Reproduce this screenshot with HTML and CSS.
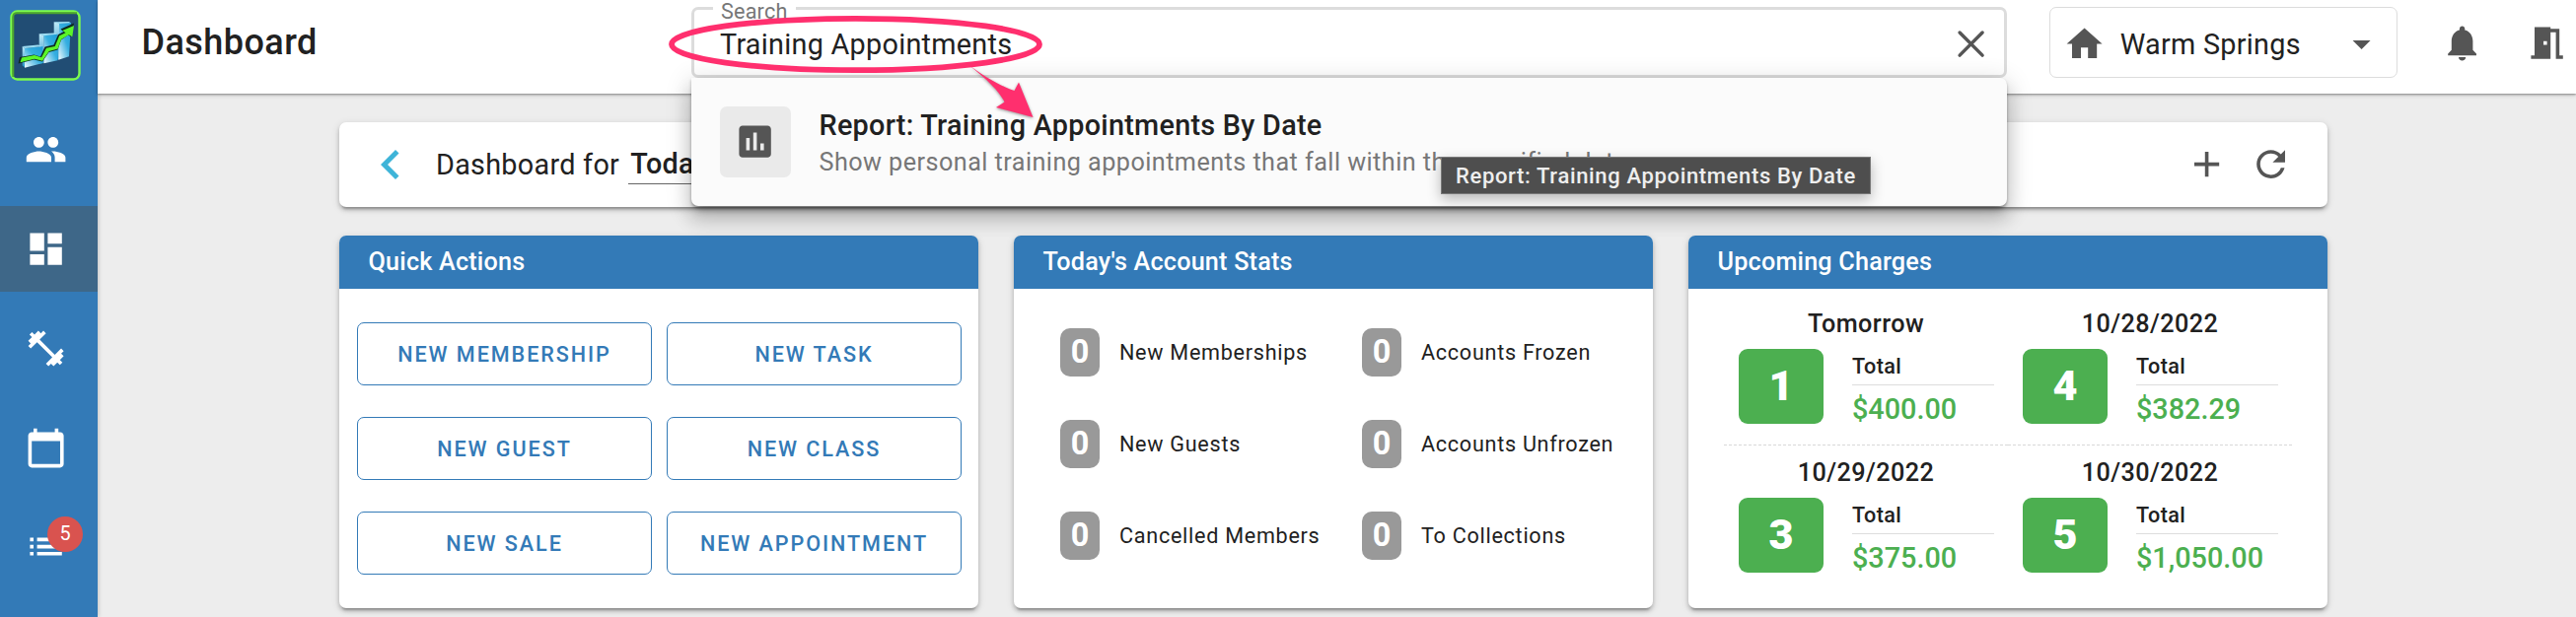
FILE: index.html
```html
<!DOCTYPE html>
<html lang="en">
<head>
<meta charset="utf-8">
<title>Dashboard</title>
<link rel="stylesheet" href="styles.css">
</head>
<body>
<div class="app">
  <nav class="sidebar">
    <a class="logo">
      <svg viewBox="0 0 72 72" width="72" height="72">
        <defs>
          <linearGradient id="bar" x1="1" y1="0" x2="0" y2="1">
            <stop offset="0" stop-color="#1f9bd6"/><stop offset=".45" stop-color="#35aee0"/><stop offset="1" stop-color="#f2fbff"/>
          </linearGradient>
          <linearGradient id="side" x1="0" y1="0" x2="0" y2="1">
            <stop offset="0" stop-color="#bfeaf8"/><stop offset="1" stop-color="#1d8fc4"/>
          </linearGradient>
        </defs>
        <rect x="1.500" y="1.500" width="69" height="69" rx="6" fill="#214d74" stroke="#7cfb4c" stroke-width="2.400"/>
        <path d="M3.300 68V7q0-3.700 3.700-3.700h61" fill="none" stroke="#4ea52e" stroke-width="2"/>
        <path d="M44.700 12.300l5.500 1v36.700l-5.500 1z" fill="url(#side)"/><path d="M50 13.500l12-.5-2 34.300-10.700 3.400z" fill="url(#bar)"/>
        <path d="M44.700 12.300l15-.3 2.300 1.300-12 .7z" fill="#9bdcf2"/>
        <path d="M29.700 24.300l5 1.500v28l-5 1z" fill="url(#side)"/><path d="M34.500 26l14-1.500v26.800l-14 3z" fill="url(#bar)"/>
        <path d="M29.700 24.300l16-.8 2.500 1.200-13.700 1.600z" fill="#9bdcf2"/>
        <path d="M12.700 37l2.500 2v19.500l-2.500-2z" fill="url(#side)"/><path d="M15 39l18.500-2v17l-18.500 4.700z" fill="url(#bar)"/>
        <path d="M12.700 37l16-1.500 4.500 1.500-18.200 2z" fill="#9bdcf2"/>
        <path d="M8.500 54.500l1.500-6.500 14.500-2.500 6.500 2 4.500-10 9-2 4.500-10.500 5.500-2.700-3-2.800 13.500-6-3 14-3-2-7 5-3.500 10-9 2.500-6.500 9.500-8.500-2z" fill="#0d2a20"/>
        <path d="M10.500 53.300l1.500-4.800 13-2.400 7 2.200 5-9.500 8.700-1.800 4.500-10.700 6.300-3-3.200-2.300 11.700-5-1.700 11.300-3.600-2-7.700 4.700-3.300 9.500-9 2.500-6.700 9.700-8-2z" fill="#5af52a"/>
      </svg>
    </a>
    <a class="nav-item"><svg class="icon" viewBox="0 0 24 24"><path d="M16 11c1.660 0 2.990-1.340 2.990-3S17.660 5 16 5s-3 1.340-3 3 1.340 3 3 3zm-8 0c1.660 0 2.990-1.340 2.990-3S9.660 5 8 5 5 6.340 5 8s1.340 3 3 3zm0 2c-2.330 0-7 1.170-7 3.500V19h14v-2.500c0-2.330-4.670-3.500-7-3.500zm8 0c-.29 0-.62.02-.97.05 1.160.84 1.970 1.970 1.970 3.450V19h6v-2.500c0-2.330-4.670-3.500-7-3.500z"/></svg></a>
    <a class="nav-item active"><svg class="icon" viewBox="0 0 24 24"><path d="M3 13h8V3H3v10zm0 8h8v-6H3v6zm10 0h8V11h-8v10zm0-18v6h8V3h-8z"/></svg></a>
    <a class="nav-item"><svg class="icon" viewBox="0 0 24 24"><path d="M20.57 14.86L22 13.43 20.57 12 17 15.57 8.43 7 12 3.43 10.57 2 9.14 3.43 7.71 2 5.57 4.14 4.14 2.71 2.71 4.14l1.43 1.43L2 7.71l1.43 1.43L2 10.57 3.43 12 7 8.43 15.57 17 12 20.57 13.43 22l1.43-1.43L16.29 22l2.14-2.14 1.43 1.43 1.43-1.43-1.43-1.43L22 16.29z"/></svg></a>
    <a class="nav-item"><svg class="icon" viewBox="0 0 24 24"><path d="M20 3h-1V1h-2v2H7V1H5v2H4c-1.1 0-2 .9-2 2v16c0 1.1.9 2 2 2h16c1.1 0 2-.9 2-2V5c0-1.1-.9-2-2-2zm0 18H4V8h16v13z"/></svg></a>
    <a class="nav-item"><svg class="icon" viewBox="0 0 24 24"><path d="M3 13h2v-2H3v2zm0 4h2v-2H3v2zm0-8h2V7H3v2zm4 4h14v-2H7v2zm0 4h14v-2H7v2zM7 7v2h14V7H7z"/></svg><span class="badge">5</span></a>
  </nav>

  <div class="page">
    <header class="topbar">
      <h1 class="title">Dashboard</h1>
      <div class="search">
        <div class="search-field">
          <span class="search-label">Search</span>
          <span class="search-value">Training Appointments</span>
          <svg class="icon clear" viewBox="0 0 24 24"><path d="M5.6 5.6l12.8 12.8M18.4 5.6L5.6 18.4"/></svg>
        </div>
        <div class="results">
          <div class="result-icon"><svg class="icon" viewBox="0 0 24 24"><path d="M19 3H5c-1.1 0-2 .9-2 2v14c0 1.1.9 2 2 2h14c1.1 0 2-.9 2-2V5c0-1.1-.9-2-2-2zM9 17H7v-7h2v7zm4 0h-2V7h2v10zm4 0h-2v-4h2v4z"/></svg></div>
          <div class="result-text">
            <div class="result-title">Report: Training Appointments By Date</div>
            <div class="result-desc">Show personal training appointments that fall within the specified date range.</div>
          </div>
        </div>
        <div class="tooltip">Report: Training Appointments By Date</div>
        <svg class="callout" viewBox="0 0 400 130" width="400" height="130">
          <ellipse cx="197.5" cy="45" rx="186.5" ry="26.2"/>
          <path class="callout-arrow" d="M313 66.500C332 80 346 88 358.500 92L363 83.500L377.500 119L340 109L348.500 103.500C343 92 331 81 313 66.500z"/>
        </svg>
      </div>
      <div class="location">
        <svg class="icon" viewBox="0 0 24 24"><path d="M10 20v-6h4v6h5v-8h3L12 3 2 12h3v8z"/></svg>
        <span class="location-name">Warm Springs</span>
        <svg class="icon" viewBox="0 0 24 24"><path d="M7 10l5 5 5-5z"/></svg>
      </div>
      <div class="top-icons">
        <svg class="icon" viewBox="0 0 24 24"><path d="M12 22c1.1 0 2-.9 2-2h-4c0 1.1.89 2 2 2zm6-6v-5c0-3.07-1.64-5.64-4.5-6.32V4c0-.83-.67-1.5-1.5-1.5s-1.500.67-1.500 1.500v.68C7.630 5.360 6 7.920 6 11v5l-2 2v1h16v-1l-2-2z"/></svg>
        <svg class="icon" viewBox="0 0 24 24"><path d="M14 6v15H3v-2h2V3h9v1h5v15h2v2h-4V6h-3zm-4 5v2h2v-2h-2z"/></svg>
      </div>
    </header>

    <main class="content">
      <section class="datebar">
        <svg class="chevron" viewBox="0 0 24 24"><path d="M15.410 7.410L14 6l-6 6 6 6 1.410-1.410L10.830 12z"/></svg>
        <span class="date-label">Dashboard for</span>
        <span class="date-value">Today</span>
        <div class="date-actions">
          <svg class="icon" viewBox="0 0 24 24"><path d="M19 13h-6v6h-2v-6H5v-2h6V5h2v6h6v2z"/></svg>
          <svg class="icon" viewBox="0 0 24 24"><path d="M17.650 6.350C16.200 4.900 14.210 4 12 4c-4.420 0-7.990 3.580-7.990 8s3.570 8 7.990 8c3.730 0 6.840-2.550 7.730-6h-2.080c-.82 2.330-3.040 4-5.650 4-3.310 0-6-2.690-6-6s2.690-6 6-6c1.660 0 3.140.69 4.220 1.780L13 11h7V4l-2.350 2.350z"/></svg>
        </div>
      </section>

      <div class="cards">
        <section class="card">
          <h2 class="card-head">Quick Actions</h2>
          <div class="actions">
            <button class="btn">NEW MEMBERSHIP</button><button class="btn">NEW TASK</button>
            <button class="btn">NEW GUEST</button><button class="btn">NEW CLASS</button>
            <button class="btn">NEW SALE</button><button class="btn">NEW APPOINTMENT</button>
          </div>
        </section>

        <section class="card">
          <h2 class="card-head">Today's Account Stats</h2>
          <div class="stats">
            <div class="stat"><b class="count">0</b><span>New Memberships</span></div>
            <div class="stat"><b class="count">0</b><span>Accounts Frozen</span></div>
            <div class="stat"><b class="count">0</b><span>New Guests</span></div>
            <div class="stat"><b class="count">0</b><span>Accounts Unfrozen</span></div>
            <div class="stat"><b class="count">0</b><span>Cancelled Members</span></div>
            <div class="stat"><b class="count">0</b><span>To Collections</span></div>
          </div>
        </section>

        <section class="card">
          <h2 class="card-head">Upcoming Charges</h2>
          <div class="charges">
            <div class="charge"><div class="day">Tomorrow</div><div class="sum"><b class="num">1</b><div class="amount"><div class="total">Total</div><div class="money">$400.00</div></div></div></div>
            <div class="charge"><div class="day">10/28/2022</div><div class="sum"><b class="num">4</b><div class="amount"><div class="total">Total</div><div class="money">$382.29</div></div></div></div>
            <div class="charge"><div class="day">10/29/2022</div><div class="sum"><b class="num">3</b><div class="amount"><div class="total">Total</div><div class="money">$375.00</div></div></div></div>
            <div class="charge"><div class="day">10/30/2022</div><div class="sum"><b class="num">5</b><div class="amount"><div class="total">Total</div><div class="money">$1,050.00</div></div></div></div>
          </div>
        </section>
      </div>
    </main>
  </div>
</div>
</body>
</html>
```
FILE: styles.css
```css
* { box-sizing: border-box; }
body {
  margin: 0;
  overflow: hidden;
  background: #ededed;
  color: #212121;
  font-family: Roboto, "Liberation Sans", sans-serif;
}
.app { display: flex; height: 626px; overflow: hidden; }
.icon { display: block; flex: none; width: 43.2px; height: 43.2px; fill: #555; }

/* Sidebar */
.sidebar {
  position: relative;
  z-index: 1;
  flex: none;
  width: 99px;
  background: #337ab7;
  box-shadow: 0 0 5px rgba(0,0,0,.25);
}
.logo { display: block; height: 108.600px; padding: 10px 0 0 10px; }
.logo svg { display: block; }
.nav-item {
  position: relative;
  display: flex;
  align-items: center;
  height: 86.4px;
  margin-bottom: 14.4px;
  padding-left: 24.7px;
}
.nav-item .icon { fill: #fff; }
.nav-item.active { background: #3e6788; }
.badge {
  position: absolute;
  left: 48px;
  top: 12.500px;
  width: 36px;
  height: 36px;
  border-radius: 50%;
  background: #d9534f;
  color: #fff;
  font-size: 19.800px;
  line-height: 35px;
  text-align: center;
}

/* Top bar */
.page { flex: 1; min-width: 0; }
.topbar {
  position: relative;
  z-index: 2;
  display: flex;
  height: 95px;
  padding: 7px 0 0 44.500px;
  background: #fff;
  box-shadow: 0 1px 2px rgba(0,0,0,.38), 0 2px 5px rgba(0,0,0,.12);
}
.title { width: 557.500px; margin: 0; font-size: 36px; font-weight: 500; line-height: 72px; letter-spacing: .0125em; }
.search { position: relative; width: 1334px; height: 72px; }
.search-field {
  position: relative;
  display: flex;
  align-items: center;
  justify-content: space-between;
  height: 72px;
  padding: 4px 12px 0 26px;
  border: 3px solid #dcdcdc;
  border-radius: 7px;
}
.search-label {
  position: absolute;
  left: 19px;
  top: -12px;
  padding: 0 8px;
  background: #fff;
  color: #777;
  font-size: 21.600px;
  line-height: 28px;
  letter-spacing: .009em;
}
.search-value { font-size: 28.800px; line-height: 40px; letter-spacing: .009375em; }
.clear { fill: none; stroke: #555; stroke-width: 1.9; stroke-linecap: round; }
.results {
  position: absolute;
  left: 0;
  top: 72px;
  display: flex;
  gap: 28.500px;
  width: 1334px;
  height: 130px;
  padding: 29px;
  border-radius: 0 7px 7px 7px;
  background: #fbfbfb;
  box-shadow: 0 9px 9px -5px rgba(0,0,0,.2), 0 14px 18px 2px rgba(0,0,0,.14), 0 5px 25px 4px rgba(0,0,0,.12), 0 2px 3px rgba(0,0,0,.3);
}
.result-icon {
  display: flex;
  align-items: center;
  justify-content: center;
  flex: none;
  width: 72px;
  height: 72px;
  border-radius: 7px;
  background: #eaeaea;
}
.result-text { white-space: nowrap; }
.result-title { font-size: 28.800px; font-weight: 500; line-height: 38px; letter-spacing: .009375em; }
.result-desc { color: #777; font-size: 25.200px; line-height: 37px; letter-spacing: .0179em; }
.tooltip {
  position: absolute;
  left: 760px;
  top: 152px;
  width: 436px;
  height: 38px;
  border: 1px solid #777;
  background: #4e4e4e;
  box-shadow: 0 5px 14px rgba(0,0,0,.28);
  color: #eee;
  font-size: 22px;
  font-weight: 500;
  line-height: 37px;
  letter-spacing: .65px;
  text-align: center;
  white-space: nowrap;
}
.callout { position: absolute; left: -31px; top: -7px; pointer-events: none; }
.callout ellipse { fill: none; stroke: #ff2f6e; stroke-width: 5.800; }
.callout-arrow { fill: #ff2f6e; filter: drop-shadow(0 1px 1.500px rgba(0,0,0,.4)); }
.location {
  display: flex;
  align-items: center;
  width: 353px;
  height: 72px;
  margin-left: 43px;
  padding: 4px 13.500px 0 12.500px;
  border: 1px solid #dcdcdc;
  border-radius: 7px;
}
.location-name { flex: 1; margin-left: 15px; font-size: 28.800px; line-height: 40px; letter-spacing: .009375em; }
.top-icons { display: flex; gap: 43.200px; padding-top: 15px; margin-left: 43.500px; }

/* Date bar */
.content { width: 2016px; margin: 29px 0 0 245px; }
.datebar, .card { border-radius: 7px; background: #fff; box-shadow: 0 5px 2px -3px rgba(0,0,0,.2), 0 3px 4px rgba(0,0,0,.2), 0 2px 9px rgba(0,0,0,.12); }
.datebar { display: flex; align-items: center; height: 86px; padding: 0 36px 0 22px; font-size: 28.800px; letter-spacing: .009375em; }
.chevron { width: 60px; height: 60px; fill: #3eb4d8; }
.date-label { margin-left: 16px; }
.date-value { margin-left: 9px; padding: 0 2px 2px; border-bottom: 1px solid #666; font-weight: 500; line-height: 36px; }
.date-actions { display: flex; gap: 21.600px; margin-left: auto; }

/* Cards */
.cards { display: grid; grid-template-columns: repeat(3, 648px); gap: 36px; margin-top: 29px; }
.card { height: 378px; overflow: hidden; }
.card-head { height: 54px; margin: 0; padding-left: 29.500px; background: #337ab7; color: #fff; font-size: 25.200px; font-weight: 500; line-height: 54px; letter-spacing: .008em; }
.actions { display: grid; grid-template-columns: 299px 299px; gap: 32px 15px; padding: 34px 18px; }
.btn {
  height: 64px;
  padding: 0;
  border: 1px solid #337ab7;
  border-radius: 7px;
  background: #fff;
  color: #337ab7;
  font-family: inherit;
  font-size: 21.600px;
  font-weight: 500;
  letter-spacing: .0893em;
}
.stats { display: grid; grid-template-columns: 306px 1fr; gap: 44px 0; padding: 40px 0 0 47px; }
.stat { display: flex; align-items: center; gap: 20px; height: 49px; font-size: 21.600px; letter-spacing: .0333em; }
.count { width: 40px; height: 49px; border-radius: 10px; background: #999; color: #fff; font-size: 32.400px; font-weight: 700; line-height: 48px; letter-spacing: 0; text-align: center; }
.charges { display: grid; grid-template-columns: 288px 288px; padding: 8px 36px; }
.charge { height: 151px; }
.charge:nth-child(-n+2) { border-bottom: 1px dashed #d8d8d8; }
.day { height: 53px; font-size: 25.200px; font-weight: 500; line-height: 56px; letter-spacing: .0179em; text-align: center; }
.sum { display: flex; gap: 29px; padding-left: 15px; }
.num { width: 86px; height: 76px; border-radius: 9px; background: #4caf50; color: #fff; font-size: 43.200px; font-weight: 900; line-height: 75px; text-align: center; }
.amount { width: 144px; font-weight: 500; }
.total { height: 37px; border-bottom: 1px solid #ddd; font-size: 21.600px; line-height: 36px; letter-spacing: .0179em; }
.money { color: #4caf50; font-size: 28.800px; line-height: 49px; letter-spacing: 0; }
```
